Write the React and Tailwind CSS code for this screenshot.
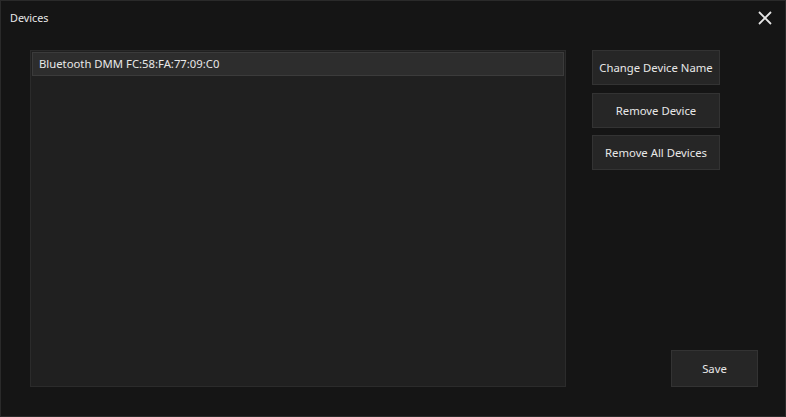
import React from 'react';

const devices = ['Bluetooth DMM FC:58:FA:77:09:C0'];

const ActionButton = ({ children, className = '' }) => (
    <button
        className={`h-[35px] w-[128px] pt-[2px] bg-[#262626] border border-[#333333] text-[#e8e8e8] text-[11.3px] ${className}`}
    >
        {children}
    </button>
);

const App = () => {
    return (
        <div
            className="w-[786px] h-[417px] bg-[#151515] border border-[#2a2a2a] flex flex-col"
            style={{ fontFamily: '"Noto Sans", "Open Sans", sans-serif' }}
        >
            {/* Title bar */}
            <div className="h-[34px] flex items-center justify-between pl-[9px] pr-[13px]">
                <span className="text-[10.8px] text-[#e8e8e8]">Devices</span>
                <svg width="14" height="14" viewBox="0 0 14 14" className="text-[#e6e6e6]">
                    <path d="M1 1 L13 13 M13 1 L1 13" stroke="currentColor" strokeWidth="1.8" />
                </svg>
            </div>

            {/* Body */}
            <div className="flex pl-[29px] pt-[15px] pr-[27px]">
                <div className="w-[536px] h-[337px] bg-[#202020] border border-[#2b2b2b] p-[1px]">
                    {devices.map((d) => (
                        <div
                            key={d}
                            className="h-[24px] bg-[#2d2d2d] border border-[#3b3b3b] flex items-center pl-[6px] pt-[1px] text-[11.3px] text-[#e8e8e8]"
                        >
                            {d}
                        </div>
                    ))}
                </div>

                <div className="ml-[26px] flex-1 flex flex-col justify-between">
                    <div className="flex flex-col">
                        <ActionButton>Change Device Name</ActionButton>
                        <ActionButton className="mt-[8px]">Remove Device</ActionButton>
                        <ActionButton className="mt-[7px]">Remove All Devices</ActionButton>
                    </div>
                    <button className="self-end w-[87px] h-[37px] pt-[2px] bg-[#262626] border border-[#333333] text-[#e8e8e8] text-[11.3px]">
                        Save
                    </button>
                </div>
            </div>
        </div>
    );
};

export default App;
